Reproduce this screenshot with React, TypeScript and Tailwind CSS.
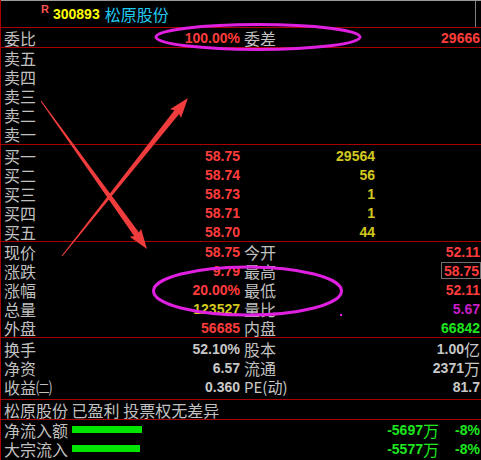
import React from "react";

const cn = '"Noto Sans CJK SC", "Noto Sans", sans-serif';
const num = '"Liberation Sans", Arial, sans-serif';

type Cell = { text: string; color: string; unit?: string };

const arrowPoints = (x1: number, y1: number, x2: number, y2: number, w0: number, w1: number, hl: number, hw: number) => {
  const dx = x2 - x1;
  const dy = y2 - y1;
  const len = Math.hypot(dx, dy);
  const ux = dx / len;
  const uy = dy / len;
  const nx = -uy;
  const ny = ux;
  const bx = x2 - ux * hl;
  const by = y2 - uy * hl;
  const pts = [
    [x1 + (nx * w0) / 2, y1 + (ny * w0) / 2],
    [bx + (nx * w1) / 2, by + (ny * w1) / 2],
    [bx + (nx * hw) / 2 - ux * 2, by + (ny * hw) / 2 - uy * 2],
    [x2, y2],
    [bx - (nx * hw) / 2 - ux * 2, by - (ny * hw) / 2 - uy * 2],
    [bx - (nx * w1) / 2, by - (ny * w1) / 2],
    [x1 - (nx * w0) / 2, y1 - (ny * w0) / 2],
  ];
  return pts.map((p) => p.join(",")).join(" ");
};

const Label = ({ children }: { children: React.ReactNode }) => (
  <span className="text-[16px] leading-none text-[#c0c0c0]" style={{ fontFamily: cn }}>
    {children}
  </span>
);

const Num = ({ c }: { c: Cell }) => (
  <span className={`flex items-center leading-none ${c.color}`}>
    <span className="text-[14px] font-bold" style={{ fontFamily: num }}>
      {c.text}
    </span>
    {c.unit && (
      <span className="text-[16px]" style={{ fontFamily: cn }}>
        {c.unit}
      </span>
    )}
  </span>
);

const Row = ({ l1, v1, l2, v2 }: { l1: string; v1?: Cell; l2?: string; v2?: Cell }) => (
  <div className="flex h-[19px] items-center">
    <div className="flex w-[239px] items-center justify-between pl-[3px]">
      <Label>{l1}</Label>
      {v1 && <Num c={v1} />}
    </div>
    <div className="flex flex-1 items-center justify-between pl-[4px] pr-[1px]">
      {l2 && <Label>{l2}</Label>}
      {v2 && <Num c={v2} />}
    </div>
  </div>
);

const red = "text-[#ff3c3c]";
const grey = "text-[#c8c8c8]";
const green = "text-[#1ee61e]";

export default function App() {
  const buys = [
    ["买一", "58.75", "29564"],
    ["买二", "58.74", "56"],
    ["买三", "58.73", "1"],
    ["买四", "58.71", "1"],
    ["买五", "58.70", "44"],
  ];

  return (
    <div className="relative h-[460px] w-[481px] overflow-hidden border-l border-[#a80000] bg-black">
      {/* header */}
      <div className="relative flex h-[28px] items-center border-y border-t-[#9a9a9a] border-b-[#a80000] pl-[40px]">
        <span className="mb-[10px] text-[11px] font-bold leading-none text-[#ff5050]" style={{ fontFamily: num }}>
          R
        </span>
        <span className="ml-[4px] text-[14px] font-bold leading-none text-[#ffff00]" style={{ fontFamily: num }}>
          300893
        </span>
        <span className="ml-[5px] text-[16px] leading-none text-[#1ec8f0]" style={{ fontFamily: cn }}>
          松原股份
        </span>
        <div className="absolute right-[5px] top-0 h-full w-px bg-[#808080]" />
      </div>

      {/* 委比 */}
      <div className="h-[20px] border-b border-[#a80000]">
        <Row l1="委比" v1={{ text: "100.00%", color: red }} l2="委差" v2={{ text: "29666", color: red }} />
      </div>

      {/* sell */}
      <div className="flex h-[97px] flex-col border-b border-[#a80000]">
        {["卖五", "卖四", "卖三", "卖二", "卖一"].map((s) => (
          <Row key={s} l1={s} />
        ))}
      </div>

      {/* buy */}
      <div className="flex h-[97px] flex-col border-b border-[#a80000] pt-[1px]">
        {buys.map(([l, p, v]) => (
          <div key={l} className="flex h-[19px] items-center">
            <div className="flex w-[239px] items-center justify-between pl-[3px]">
              <Label>{l}</Label>
              <Num c={{ text: p, color: red }} />
            </div>
            <div className="flex w-[135px] justify-end">
              <Num c={{ text: v, color: "text-[#d2c81e]" }} />
            </div>
          </div>
        ))}
      </div>

      {/* quote */}
      <div className="flex h-[96px] flex-col border-b border-[#a80000]">
        <Row l1="现价" v1={{ text: "58.75", color: red }} l2="今开" v2={{ text: "52.11", color: red }} />
        <div className="flex h-[19px] items-center">
          <div className="flex w-[239px] items-center justify-between pl-[3px]">
            <Label>涨跌</Label>
            <Num c={{ text: "9.79", color: red }} />
          </div>
          <div className="flex flex-1 items-center justify-between pl-[4px]">
            <Label>最高</Label>
            <span className="flex h-[17px] items-center border border-[#707070] pl-[2px] pr-px">
              <Num c={{ text: "58.75", color: red }} />
            </span>
          </div>
        </div>
        <Row l1="涨幅" v1={{ text: "20.00%", color: red }} l2="最低" v2={{ text: "52.11", color: red }} />
        <Row l1="总量" v1={{ text: "123527", color: "text-[#d2c81e]" }} l2="量比" v2={{ text: "5.67", color: "text-[#c81ec8]" }} />
        <Row l1="外盘" v1={{ text: "56685", color: red }} l2="内盘" v2={{ text: "66842", color: green }} />
      </div>

      {/* fundamentals */}
      <div className="flex h-[62px] flex-col border-b border-[#a80000] pt-[1px]">
        <Row l1="换手" v1={{ text: "52.10%", color: grey }} l2="股本" v2={{ text: "1.00", unit: "亿", color: grey }} />
        <Row l1="净资" v1={{ text: "6.57", color: grey }} l2="流通" v2={{ text: "2371", unit: "万", color: grey }} />
        <div className="flex h-[19px] items-center">
          <div className="flex w-[239px] items-center justify-between pl-[3px]">
            <Label>收益㈡</Label>
            <Num c={{ text: "0.360", color: grey }} />
          </div>
          <div className="flex flex-1 items-center justify-between pl-[4px] pr-[1px]">
            <span className="text-[15px] leading-none text-[#c8c8c8]" style={{ fontFamily: cn }}>
              PE(动)
            </span>
            <Num c={{ text: "81.7", color: grey }} />
          </div>
        </div>
      </div>

      {/* tags */}
      <div className="flex h-[20px] items-center border-b border-[#a80000] pl-[3px]">
        <Label>松原股份 已盈利 投票权无差异</Label>
      </div>

      {/* money flow */}
      <div className="flex flex-col">
        {[
          ["净流入额", 70, "-5697"],
          ["大宗流入", 68, "-5577"],
        ].map(([l, w, v]) => (
          <div key={l as string} className="flex h-[19px] items-center pl-[3px]">
            <div className="flex w-[236px] items-center gap-[4px]">
              <Label>{l}</Label>
              <div className="h-[7px] bg-[#00e600]" style={{ width: w as number }} />
            </div>
            <div className="flex w-[199px] justify-end">
              <Num c={{ text: v as string, unit: "万", color: green }} />
            </div>
            <div className="flex flex-1 justify-end pr-[1px]">
              <Num c={{ text: "-8%", color: green }} />
            </div>
          </div>
        ))}
      </div>

      {/* annotations */}
      <svg className="pointer-events-none absolute left-0 top-0" width={481} height={460} viewBox="0 0 481 460">
        <ellipse cx={257} cy={37} rx={102} ry={12.5} fill="none" stroke="#e020e0" strokeWidth={3} />
        <ellipse cx={246.5} cy={291} rx={94} ry={24} fill="none" stroke="#e020e0" strokeWidth={3} />
        <rect x={339} y={314} width={2} height={2} fill="#e020e0" />
        <polygon points={arrowPoints(40, 101, 146, 249, 1, 6, 18, 14)} fill="#f03c3c" />
        <polygon points={arrowPoints(61, 256, 187, 98, 1, 6, 18, 14)} fill="#f03c3c" />
      </svg>
    </div>
  );
}
